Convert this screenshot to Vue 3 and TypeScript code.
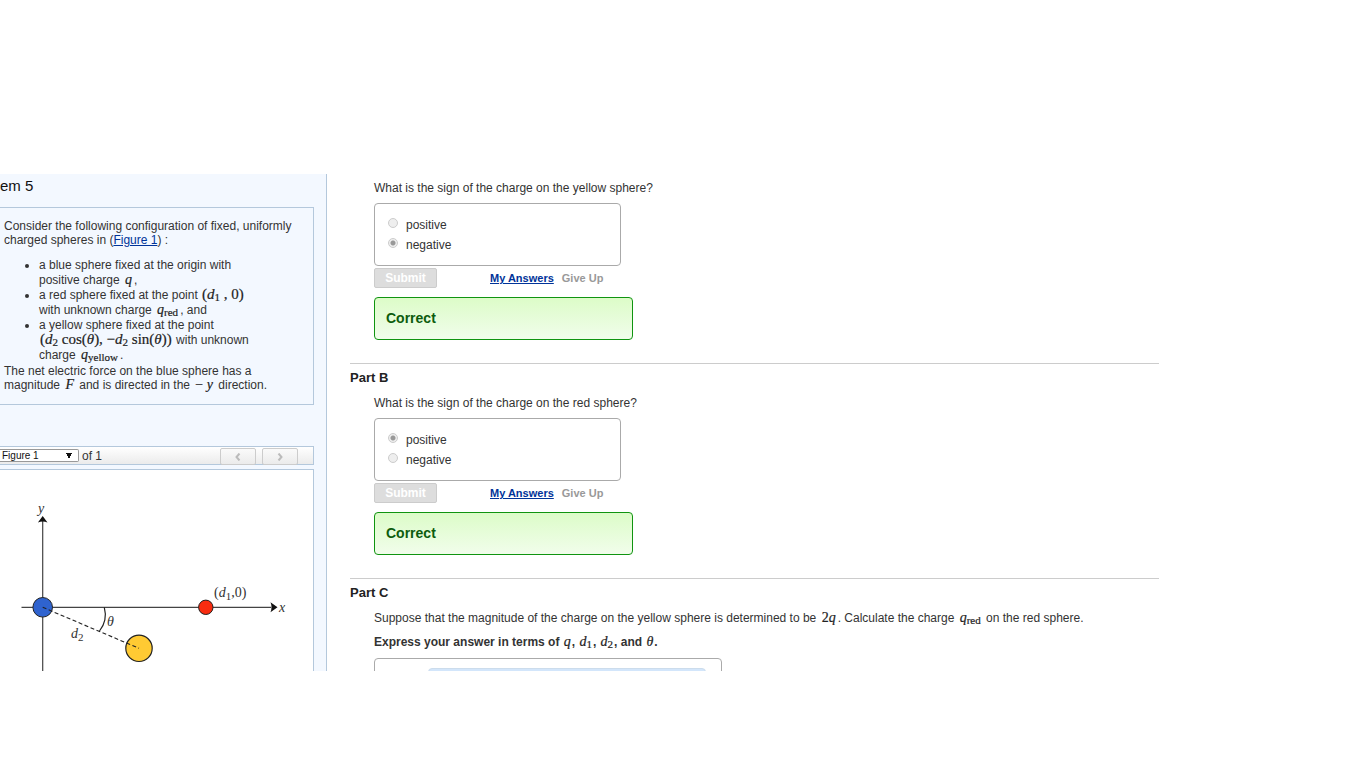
<script setup lang="ts">
import { ref } from 'vue'

interface ChoicePart {
  id: string
  title: string
  question: string
  answer: string
}

const options: string[] = ['positive', 'negative']

const parts: ChoicePart[] = [
  { id: 'a', title: '', question: 'What is the sign of the charge on the yellow sphere?', answer: 'negative' },
  { id: 'b', title: 'Part B', question: 'What is the sign of the charge on the red sphere?', answer: 'positive' },
]

const figure = ref('Figure 1')
const answerC = ref('')
</script>

<template>
  <div class="page">
    <aside class="side">
      <h1 class="title">em 5</h1>

      <section class="intro">
        <p>
          Consider the following configuration of fixed, uniformly<br />
          charged spheres in (<a href="#figure">Figure 1</a>) :
        </p>
        <ul>
          <li>
            a blue sphere fixed at the origin with<br />
            positive charge <span class="math"><i>q</i></span>,
          </li>
          <li>
            a red sphere fixed at the point <span class="math wide">(<i>d</i><sub>1</sub> , 0)</span><br />
            with unknown charge <span class="math"><i>q</i><sub>red</sub></span>, and
          </li>
          <li>
            a yellow sphere fixed at the point<br />
            <span class="math wide">(<i>d</i><sub>2</sub> cos(<i>θ</i>), −<i>d</i><sub>2</sub> sin(<i>θ</i>))</span> with unknown<br />
            charge <span class="math"><i>q</i><sub>yellow</sub></span>.
          </li>
        </ul>
        <p>
          The net electric force on the blue sphere has a<br />
          magnitude <span class="math"><i>F</i></span> and is directed in the
          <span class="math">− <i>y</i></span> direction.
        </p>
      </section>

      <div class="toolbar">
        <select v-model="figure" aria-label="Figure">
          <option>Figure 1</option>
        </select>
        <span class="count">of 1</span>
        <div class="pager">
          <button type="button" disabled aria-label="Previous figure">
            <svg width="8" height="8" viewBox="0 0 8 8"><path d="M5.500 0.500 2.500 4l3 3.500" /></svg>
          </button>
          <button type="button" disabled aria-label="Next figure">
            <svg width="8" height="8" viewBox="0 0 8 8"><path d="m2.500 0.500 3 3.500-3 3.500" /></svg>
          </button>
        </div>
      </div>

      <div id="figure" class="figure">
        <svg width="313" height="260" viewBox="0 0 313 260" role="img" aria-label="Sphere configuration">
          <g stroke="#444" stroke-width="1.2" fill="none">
            <path d="M42.7 51V260M21.500 137.300H271" />
            <path d="M104.300 137.300q3.500 13-4.800 23.700" stroke="#222" />
          </g>
          <path d="m42.700 46 4.800 6.500q-4.800-2-9.600 0Z" fill="#111" />
          <path d="m277.500 137.300-7 5q2-5 0-10Z" fill="#111" />
          <circle cx="42.700" cy="137.300" r="9.800" fill="#2f63cf" stroke="#222" />
          <circle cx="205.800" cy="137.300" r="7.200" fill="#f82c10" stroke="#222" />
          <circle cx="139" cy="178.300" r="13.200" fill="#ffca33" stroke="#222" stroke-width="1.200" />
          <path d="M42.700 137.300 139 178.300" stroke="#222" stroke-width="1.100" stroke-dasharray="4 2.500" />
          <g class="labels">
            <text x="38" y="43"><tspan class="it">y</tspan></text>
            <text x="279" y="142"><tspan class="it">x</tspan></text>
            <text x="214" y="127">(<tspan class="it">d</tspan><tspan class="sub" dy="3">1</tspan><tspan dy="-3">,0)</tspan></text>
            <text x="107" y="156"><tspan class="it">θ</tspan></text>
            <text x="71" y="168"><tspan class="it">d</tspan><tspan class="sub" dy="3">2</tspan></text>
          </g>
        </svg>
      </div>
    </aside>

    <main class="content">
      <section v-for="part in parts" :key="part.id" class="part">
        <h2 v-if="part.title">{{ part.title }}</h2>
        <div class="body">
          <p>{{ part.question }}</p>
          <div class="choices">
            <label v-for="option in options" :key="option">
              <input
                type="radio"
                :name="'part-' + part.id"
                :value="option"
                :checked="option === part.answer"
                disabled
              />
              <span>{{ option }}</span>
            </label>
          </div>
          <div class="actions">
            <button type="button" class="submit" disabled>Submit</button>
            <a href="#answers">My Answers</a>
            <button type="button" class="give-up" disabled>Give Up</button>
          </div>
          <div class="result">Correct</div>
        </div>
      </section>

      <section class="part">
        <h2>Part C</h2>
        <div class="body">
          <p>
            Suppose that the magnitude of the charge on the yellow sphere is determined to be
            <span class="math">2<i>q</i></span>. Calculate the charge
            <span class="math"><i>q</i><sub>red</sub></span> on the red sphere.
          </p>
          <p class="hint">
            Express your answer in terms of <span class="math"><i>q</i></span>,
            <span class="math"><i>d</i><sub>1</sub></span>,
            <span class="math"><i>d</i><sub>2</sub></span>, and
            <span class="math"><i>θ</i></span>.
          </p>
          <div class="answer">
            <input v-model="answerC" type="text" aria-label="Answer for Part C" />
          </div>
        </div>
      </section>
    </main>
  </div>
</template>

<style>
html,
body {
  margin: 0;
  background: #fff;
}
</style>

<style scoped>
.page {
  box-sizing: border-box;
  display: flex;
  height: 100vh;
  overflow: hidden;
  border: solid #fff;
  border-width: 174px 0 97px;
  font: 12px/14px "Liberation Sans", Arial, sans-serif;
  color: #333;
}
p,
h1,
h2,
ul {
  margin: 0;
}
a {
  color: #039;
}
.side {
  display: flex;
  flex: none;
  flex-direction: column;
  box-sizing: border-box;
  width: 327px;
  padding-right: 12px;
  border-right: 1px solid #b4c8dc;
  background: #f3f8ff;
  overflow: hidden;
}
.title {
  padding: 3px 0 12px;
  font-size: 15px;
  line-height: 18px;
  font-weight: 400;
  color: #111;
}
.intro {
  padding: 11px 0 12px 4px;
  border: solid #b4c8dc;
  border-width: 1px 1px 1px 0;
  white-space: nowrap;
}
.intro ul {
  margin: 11px 0 1px;
  padding-left: 35px;
  line-height: 15px;
}
.math {
  margin: 0 2px;
  font-family: "Liberation Serif", "Times New Roman", serif;
  font-size: 14px;
  line-height: 1px;
  color: #222;
  -webkit-text-stroke: 0.2px #222;
}
.wide {
  margin: 0 1px;
  font-size: 15px;
}
.math sub {
  font-size: 11px;
  line-height: 1px;
  vertical-align: -2px;
}
.toolbar {
  display: flex;
  align-items: center;
  box-sizing: border-box;
  height: 19px;
  margin-top: 41px;
  border: solid #b4c8dc;
  border-width: 1px 1px 1px 0;
  background: linear-gradient(#fff, #ebebeb);
}
.toolbar select {
  width: 79px;
  height: 13px;
  margin: 0 3px 0 0;
  padding: 0 4px 0 2px;
  border: 1px solid #999;
  border-left: 0;
  border-radius: 0 2px 2px 0;
  appearance: none;
  background:
    linear-gradient(to bottom right, #111 50%, transparent 50%) 69px 3px / 3px 6px no-repeat,
    linear-gradient(to bottom left, #111 50%, transparent 50%) 66px 3px / 3px 6px no-repeat,
    #fff;
  font: 10px/11px "Liberation Sans", Arial, sans-serif;
  color: #111;
}
.pager {
  display: flex;
  gap: 6px;
  margin: 2px 15px 0 auto;
}
.pager button {
  display: flex;
  align-items: center;
  justify-content: center;
  width: 36px;
  height: 17px;
  padding: 0;
  border: 1px solid #ccc;
  border-radius: 2px;
  background: linear-gradient(#fafafa, #ebebeb);
}
.pager path {
  fill: none;
  stroke: #bbb;
  stroke-width: 2;
}
.figure {
  flex: 1;
  min-height: 0;
  margin-top: 4px;
  border: solid #b4c8dc;
  border-width: 1px 1px 0 0;
  background: #fff;
  overflow: hidden;
}
.figure svg {
  display: block;
}
.labels {
  font-family: "Liberation Serif", "Times New Roman", serif;
  font-size: 14px;
  fill: #333;
}
.it {
  font-style: italic;
}
.sub {
  font-size: 11px;
}
.content {
  flex: 1;
  min-width: 0;
  margin: 0 207px 0 23px;
}
.part + .part {
  margin-top: 23px;
  padding-top: 6px;
  border-top: 1px solid #ccc;
}
h2 {
  margin-bottom: 11px;
  font-size: 13px;
  line-height: 15px;
  font-weight: 700;
  color: #222;
}
.body {
  padding-left: 24px;
}
.part:first-child .body {
  padding-top: 7px;
}
.choices {
  display: flex;
  flex-direction: column;
  box-sizing: border-box;
  width: 247px;
  margin-top: 8px;
  padding: 10px 13px 11px;
  border: 1px solid #aaa;
  border-radius: 4px;
}
.choices label {
  display: flex;
  align-items: center;
  gap: 8px;
  height: 20px;
}
.choices label span {
  padding-top: 1px;
}
.choices input {
  width: 10px;
  height: 10px;
  margin: 0 0 2px;
  border: 1px solid #ccc;
  border-radius: 50%;
  appearance: none;
  background: #eee;
}
.choices input:checked {
  background: radial-gradient(circle, #999 2px, #eee 3px);
}
.actions {
  display: flex;
  align-items: center;
  margin: 2px 0 9px;
  font-weight: 700;
}
.submit {
  width: 63px;
  height: 20px;
  margin-right: 53px;
  padding: 0;
  border: 1px solid #ccc;
  border-radius: 2px;
  background: #ddd;
  font: 700 12px/14px "Liberation Sans", Arial, sans-serif;
  color: #fff;
}
.actions a {
  font-size: 11px;
}
.give-up {
  margin-left: 8px;
  padding: 0;
  border: 0;
  background: none;
  font: 700 11px/14px "Liberation Sans", Arial, sans-serif;
  color: #999;
}
.result {
  box-sizing: border-box;
  width: 259px;
  padding: 12px 11px 13px;
  border: 1px solid #109410;
  border-radius: 4px;
  background: linear-gradient(#dcfcc8, #f1fdeb);
  font-size: 14px;
  line-height: 16px;
  font-weight: 700;
  color: #0d5c0d;
}
.hint {
  margin-top: 10px;
  font-weight: 700;
}
.hint .math {
  margin: 0 1px;
  font-weight: 400;
}
.answer {
  box-sizing: border-box;
  width: 348px;
  margin-top: 9px;
  padding: 9px 15px 20px 53px;
  border: 1px solid #aaa;
  border-radius: 4px;
}
.answer input {
  box-sizing: border-box;
  display: block;
  width: 100%;
  height: 28px;
  border: 1px solid #ccdcec;
  border-radius: 4px;
  background: #d3e6fb;
}
</style>
